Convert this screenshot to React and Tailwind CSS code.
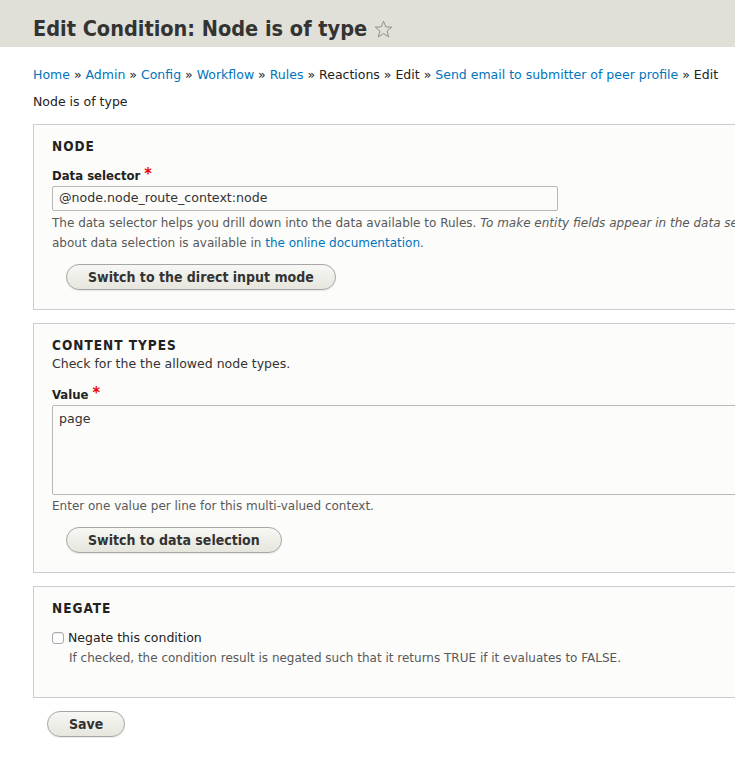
import React from "react";

const bold = "font-['DejaVu_Sans_Condensed','DejaVu_Sans',sans-serif] font-bold";

function Star() {
  return (
    <svg width="21" height="21" viewBox="0 0 24 24" className="ml-[6px] mt-[1px]">
      <polygon
        points="12,2.5 14.6,9 21.5,9.3 16.1,13.7 18,20.5 12,16.6 6,20.5 7.9,13.7 2.5,9.3 9.4,9"
        fill="none"
        stroke="#8c8c8c"
        strokeWidth="1.1"
        strokeLinejoin="round"
      />
    </svg>
  );
}

function Button({ children, className = "" }) {
  return (
    <button
      className={`h-[26px] px-[21px] rounded-full border border-[#a6a6a6] bg-gradient-to-b from-[#f7f7f4] to-[#e6e6de] text-[#333] text-[14px] leading-none shadow-[0_1px_1px_rgba(0,0,0,0.08)] ${bold} ${className}`}
    >
      {children}
    </button>
  );
}

function Legend({ children }) {
  return (
    <div className={`${bold} text-[13.5px] pt-[2px] leading-[18px] uppercase tracking-[1px] text-[#222]`}>
      {children}
    </div>
  );
}

function Label({ children }) {
  return (
    <div className={`${bold} text-[13px] pt-[1px] leading-[19px] text-[#222] flex items-start`}>
      {children}
      <span className="text-[#e00] text-[16px] leading-4 ml-[4px]">*</span>
    </div>
  );
}

function Fieldset({ children, className = "" }) {
  return (
    <div className={`w-[1000px] border border-[#ccc] bg-[#fcfcfa] pl-[18px] pt-[10px] ${className}`}>
      {children}
    </div>
  );
}

export default function App() {
  const crumbs = ["Home", "Admin", "Config", "Workflow", "Rules"];
  return (
    <div className="w-[735px] h-[775px] overflow-hidden bg-white font-['DejaVu_Sans',sans-serif] text-[12.5px] text-[#222]">
      <div className="h-[47px] bg-[#e0e0d8] px-[33px] pt-[18px] flex items-start">
        <h1 className={`${bold} text-[21.5px] text-[#333] leading-none`}>
          Edit Condition: Node is of type
        </h1>
        <Star />
      </div>

      <div className="px-[33px]">
        <div className="pt-[18px] leading-5 whitespace-nowrap">
          {crumbs.map((c) => (
            <span key={c}>
              <a className="text-[#0074bd]">{c}</a> »{" "}
            </span>
          ))}
          Reactions » Edit » <a className="text-[#0074bd]">Send email to submitter of peer profile</a> » Edit
        </div>
        <div className="mt-[7px] leading-5">Node is of type</div>

        <Fieldset className="mt-[12px] pb-[19px]">
          <Legend>Node</Legend>
          <div className="mt-[10px]">
            <Label>Data selector</Label>
          </div>
          <div className="mt-[1px] w-[506px] h-[25px] border border-[#b8b8b8] rounded-[2px] bg-[#fcfcfa] px-[6px] flex items-center text-[12.6px] text-[#333]">
            @node.node_route_context:node
          </div>
          <div className="mt-[2px] leading-5 text-[12px] text-[#595959] whitespace-nowrap">
            The data selector helps you drill down into the data available to Rules.{" "}
            <em>
              To make entity fields appear in the data selector, you may have to use the condition 'entity has field' (or 'content is of type').
            </em>{" "}
            More useful tips
            <br />
            about data selection is available in <a className="text-[#0074bd]">the online documentation</a>.
          </div>
          <Button className="mt-[11px] ml-[14px]">Switch to the direct input mode</Button>
        </Fieldset>

        <Fieldset className="mt-[13px] pb-[19px]">
          <Legend>Content types</Legend>
          <div className="leading-5 text-[#333]">Check for the the allowed node types.</div>
          <div className="mt-[10px]">
            <Label>Value</Label>
          </div>
          <div className="mt-[1px] w-[960px] h-[90px] border border-[#b8b8b8] rounded-[2px] bg-[#fcfcfa] px-[6px] pt-[3px] leading-5 text-[12.6px] text-[#333]">
            page
          </div>
          <div className="mt-[1px] leading-5 text-[12px] text-[#595959]">
            Enter one value per line for this multi-valued context.
          </div>
          <Button className="mt-[11px] ml-[14px]">Switch to data selection</Button>
        </Fieldset>

        <Fieldset className="mt-[13px] pb-[29px]">
          <Legend>Negate</Legend>
          <div className="mt-[11px] flex items-center h-5">
            <span className="w-[12px] h-[12px] rounded-[3px] border border-[#aaa] bg-white shadow-[inset_0_1px_1px_rgba(0,0,0,0.08)]" />
            <span className="ml-[4px] text-[#222]">Negate this condition</span>
          </div>
          <div className="ml-[17px] leading-5 text-[12px] text-[#595959]">
            If checked, the condition result is negated such that it returns TRUE if it evaluates to FALSE.
          </div>
        </Fieldset>

        <Button className="mt-[13px] ml-[14px]">Save</Button>
      </div>
    </div>
  );
}
